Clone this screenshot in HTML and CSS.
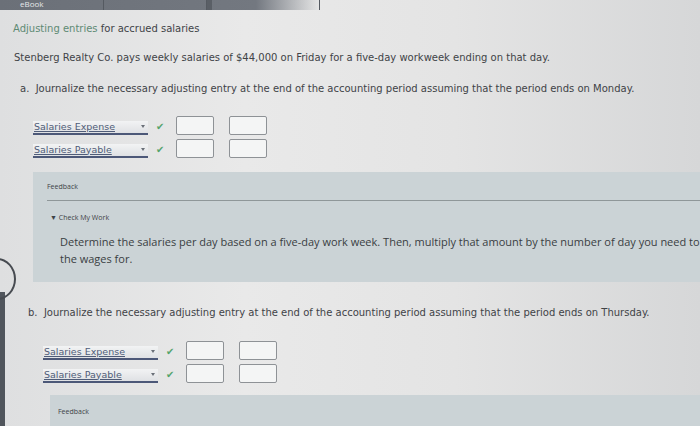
FILE: index.html
```html
<!DOCTYPE html>
<html lang="en">
<head>
    <meta charset="UTF-8">
    <meta name="viewport" content="width=device-width, initial-scale=1.0">
    <title>Adjusting entries for accrued salaries</title>
    <link rel="stylesheet" href="styles.css">
</head>
<body>
    <div class="tabs">
        <div class="tab">eBook</div>
        <div class="tab"></div>
        <div class="tab tab-wide"></div>
    </div>

    <div class="side-rail"></div>
    <div class="side-button"></div>

    <div class="content">
        <p class="title"><span class="link">Adjusting entries</span> for accrued salaries</p>
        <p class="intro">Stenberg Realty Co. pays weekly salaries of $44,000 on Friday for a five-day workweek ending on that day.</p>

        <p class="part">a.&nbsp; Journalize the necessary adjusting entry at the end of the accounting period assuming that the period ends on Monday.</p>

        <div class="journal">
            <div class="row">
                <div class="select">Salaries Expense</div>
                <span class="check">&#10004;</span>
                <div class="box"></div>
                <div class="box"></div>
            </div>
            <div class="row">
                <div class="select">Salaries Payable</div>
                <span class="check">&#10004;</span>
                <div class="box"></div>
                <div class="box"></div>
            </div>
        </div>

        <div class="feedback">
            <div class="feedback-label">Feedback</div>
            <div class="check-work">&#9660; Check My Work</div>
            <p class="hint">Determine the salaries per day based on a five-day work week. Then, multiply that amount by the number of day you need to accrue the wages for.</p>
        </div>

        <p class="part part-b">b.&nbsp; Journalize the necessary adjusting entry at the end of the accounting period assuming that the period ends on Thursday.</p>

        <div class="journal journal-b">
            <div class="row">
                <div class="select">Salaries Expense</div>
                <span class="check">&#10004;</span>
                <div class="box"></div>
                <div class="box"></div>
            </div>
            <div class="row">
                <div class="select">Salaries Payable</div>
                <span class="check">&#10004;</span>
                <div class="box"></div>
                <div class="box"></div>
            </div>
        </div>

        <div class="feedback feedback-b">
            <div class="feedback-label">Feedback</div>
        </div>
    </div>
</body>
</html>
```

FILE: styles.css
```css
body {
    margin: 0;
    height: 426px;
    overflow: hidden;
    font-family: 'DejaVu Sans', Verdana, sans-serif;
    font-size: 10px;
    color: #3f4347;
    background: linear-gradient(90deg, #dedfe0 0%, #e9e9e9 35%, #e4e4e4 65%, #d6d7d8 100%);
    position: relative;
}
p {
    margin: 0;
}

/* top tab strip */
.tabs {
    display: flex;
    height: 10px;
    width: 320px;
    background: linear-gradient(90deg, #6b7078 0%, #737880 80%, rgba(160, 164, 170, 0) 100%);
}
.tab {
    width: 114px;
    border-right: 1px solid #555a61;
    color: #e6e8ea;
    font-family: 'Open Sans', sans-serif;
    font-size: 8px;
    line-height: 8px;
    padding-left: 20px;
    box-sizing: border-box;
}
.tab-wide {
    width: 124px;
    border-left: 5px solid #5a5f66;
}

/* screen edge on the left */
.side-rail {
    position: absolute;
    left: 0;
    top: 292px;
    bottom: 0;
    width: 5px;
    background: #50555c;
}
.side-button {
    position: absolute;
    left: -22px;
    top: 258px;
    width: 34px;
    height: 38px;
    border: 2px solid #474b51;
    border-radius: 50%;
}

.content {
    padding: 13px 0 0 13px;
}
.link {
    color: #5e8a74;
}
.intro {
    margin-top: 18px;
    padding-left: 1px;
}
.part {
    margin-top: 20px;
    padding-left: 7px;
}

.journal {
    margin: 22px 0 0 20px;
    display: flex;
    flex-direction: column;
    gap: 4px;
}
.row {
    display: flex;
    align-items: center;
    height: 19px;
}
.select {
    width: 114px;
    height: 12px;
    line-height: 12px;
    font-size: 9.5px;
    color: #4f5c78;
    text-decoration: underline;
    background: linear-gradient(#f2f3f4, #dfe1e4);
    border-bottom: 2px solid #4c5878;
    position: relative;
    padding-left: 1px;
    margin-top: 4px;
}
.select::after {
    content: "";
    position: absolute;
    right: 3px;
    top: 4px;
    border-left: 2.5px solid transparent;
    border-right: 2.5px solid transparent;
    border-top: 3px solid #6a6f78;
}
.check {
    color: #55a46c;
    font-size: 10px;
    margin: 2px 12px 0 8px;
}
.box {
    width: 36px;
    height: 17px;
    border: 1px solid #8e9296;
    border-radius: 2px;
    background: #f4f5f5;
    margin-right: 15px;
}

.feedback {
    margin: 14px 0 0 20px;
    height: 110px;
    padding: 10px 0 0 14px;
    box-sizing: border-box;
    background: #cbd3d6;
    font-family: 'Open Sans', sans-serif;
}
.feedback-label {
    font-size: 7px;
    color: #3e4246;
    padding-bottom: 9px;
    border-bottom: 1px solid #8f9799;
}
.check-work {
    font-size: 7px;
    margin-top: 12px;
    padding-left: 3px;
    color: #3e4246;
}
.hint {
    margin-top: 11px;
    padding-left: 13px;
    font-size: 11px;
    line-height: 17px;
    color: #3a3e42;
    width: 680px;
}

.part-b {
    margin-top: 25px;
    padding-left: 15px;
}
.journal-b {
    margin: 23px 0 0 30px;
}
.feedback-b {
    margin: 12px 0 0 37px;
    height: 40px;
    padding-top: 12px;
    padding-left: 8px;
}
.feedback-b .feedback-label {
    border-bottom: none;
}
```
